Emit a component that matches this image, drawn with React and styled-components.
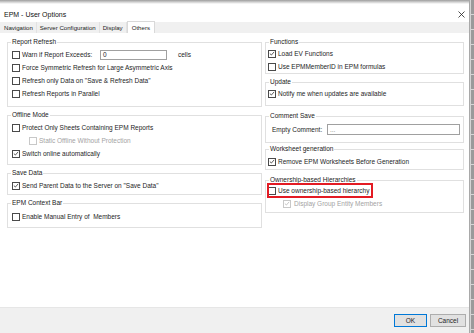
import React from "react";
import styled, { createGlobalStyle, css } from "styled-components";

const GlobalStyle = createGlobalStyle`
  html, body { margin: 0; padding: 0; background: #ffffff; }
  body { font-family: "Liberation Sans", Arial, sans-serif; color: #1e1e1e; }
  * { box-sizing: border-box; }
`;

const Screen = styled.div`
  width: 474px;
  height: 333px;
  display: flex;
  overflow: hidden;
`;

const Window = styled.div`
  flex: 0 0 470px;
  display: flex;
  flex-direction: column;
  border-right: 1px solid #a9a9a9;
  background: #ffffff;
`;

const SheetEdge = styled.div`
  flex: 1;
  border-left: 1px solid #d4d4d4;
  background: repeating-linear-gradient(
    to bottom,
    #9a9a9a 0,
    #9a9a9a 14px,
    #d6d6d6 14px,
    #d6d6d6 15px
  );
`;

const TitleBar = styled.div`
  height: 22px;
  display: flex;
  align-items: center;
  padding: 6px 4px 0 4px;
  background: linear-gradient(to bottom, #9d9d9d 0, #cfcfcf 2px, #ffffff 4px);
  font-size: 7px;
  color: #111;
`;

const CloseButton = styled.span`
  margin-left: auto;
  display: flex;
  align-items: center;
  justify-content: center;
  width: 8px;
  height: 8px;
`;

const TabStrip = styled.div`
  height: 11px;
  display: flex;
  align-items: flex-end;
  padding-left: 1px;
  background: #f0f0f0;
`;

const Tab = styled.div`
  height: 11px;
  display: flex;
  align-items: center;
  padding: 0 ${(p) => p.$pad}px;
  font-size: 6.1px;
  color: #222;
  border-right: 1px solid #e2e2e2;
  ${(p) =>
    p.$active &&
    css`
      height: 12px;
      background: #ffffff;
      border-left: 1px solid #d9d9d9;
      border-right: 1px solid #d9d9d9;
      border-top: 1px solid #d9d9d9;
    `}
`;

const Content = styled.div`
  flex: 1;
  display: grid;
  grid-template-columns: 255px 199px;
  column-gap: 3px;
  align-items: start;
  padding: 5px 5px 0 7px;
  background: #ffffff;
`;

const Column = styled.div`
  display: flex;
  flex-direction: column;
`;

const GroupBox = styled.fieldset`
  margin: ${(p) => p.$mt}px 0 0 0;
  padding: ${(p) => p.$pt}px 2px ${(p) => p.$pb}px ${(p) => p.$pl}px;
  border: 1px solid #e0e0e0;
  min-width: 0;
`;

const Legend = styled.legend`
  font-size: 6.5px;
  line-height: 8px;
  padding: 0 1px;
  margin-left: ${(p) => p.$ml}px;
  color: #222;
`;

const Row = styled.div`
  height: 13px;
  display: flex;
  align-items: center;
  gap: ${(p) => p.$gap}px;
  padding-left: ${(p) => p.$indent}px;
  font-size: 6.5px;
  white-space: nowrap;
  color: ${(p) => (p.$disabled ? "#a3a3a3" : "#1e1e1e")};
  ${(p) =>
    p.$highlight &&
    css`
      width: fit-content;
      padding-right: 3px;
      outline: 2px solid #e31b23;
      outline-offset: -1px;
    `}
`;

const Box = styled.span`
  flex: 0 0 8px;
  width: 8px;
  height: 8px;
  display: flex;
  align-items: center;
  justify-content: center;
  background: #ffffff;
  border: 1px solid ${(p) => (p.$disabled ? "#c8c8c8" : "#4a4a4a")};
`;

const FieldLabel = styled.span`
  flex: 0 0 ${(p) => p.$w}px;
`;

const TextInput = styled.span`
  flex: 0 0 ${(p) => p.$w}px;
  height: ${(p) => p.$h}px;
  display: flex;
  align-items: ${(p) => (p.$muted ? "flex-end" : "center")};
  padding-left: 2px;
  border: 1px solid #a0a0a0;
  background: #ffffff;
  color: ${(p) => (p.$muted ? "#8a8a8a" : "#1e1e1e")};
  font-size: 6.5px;
  line-height: 8px;
`;

const Unit = styled.span`
  margin-left: 9px;
`;

const Footer = styled.div`
  height: 26px;
  display: flex;
  justify-content: flex-end;
  align-items: flex-start;
  gap: 3px;
  padding: 6px 3px 0 0;
  background: #f0f0f0;
  border-top: 1px solid #e6e6e6;
`;

const Button = styled.button`
  width: ${(p) => p.$w}px;
  height: 13px;
  padding: 0;
  margin: 0;
  font-family: inherit;
  font-size: 6.5px;
  color: #1e1e1e;
  background: #e1e1e1;
  border: 1px solid ${(p) => (p.$primary ? "#0078d7" : "#adadad")};
  border-radius: 0;
`;

const Check = ({ checked, disabled }) => (
  <Box $disabled={disabled}>
    {checked && (
      <svg width="7" height="7" viewBox="0 0 7 7">
        <path
          d="M1 3.6 L2.8 5.3 L6 1.6"
          fill="none"
          stroke={disabled ? "#b5b5b5" : "#2a2a2a"}
          strokeWidth="0.9"
        />
      </svg>
    )}
  </Box>
);

const CloseIcon = () => (
  <svg width="7" height="7" viewBox="0 0 7 7">
    <path d="M0.5 0.5 L6.5 6.5 M6.5 0.5 L0.5 6.5" stroke="#222" strokeWidth="0.8" />
  </svg>
);

const leftGroups = [
  {
    title: "Report Refresh",
    mt: 0,
    pt: 2,
    pb: 6,
    rows: [
      { kind: "warn" },
      { label: "Force Symmetric Refresh for Large Asymmetric Axis" },
      { label: 'Refresh only Data on "Save & Refresh Data"' },
      { label: "Refresh Reports in Parallel" },
    ],
  },
  {
    title: "Offline Mode",
    mt: 4,
    pt: 2,
    pb: 4,
    rows: [
      { label: "Protect Only Sheets Containing EPM Reports" },
      { label: "Static Offline Without Protection", disabled: true, indent: 17 },
      { label: "Switch online automatically", checked: true },
    ],
  },
  {
    title: "Save Data",
    mt: 4,
    pt: 2,
    pb: 2,
    rows: [{ label: 'Send Parent Data to the Server on "Save Data"', checked: true }],
  },
  {
    title: "EPM Context Bar",
    mt: 4,
    pt: 3,
    pb: 4,
    rows: [{ label: "Enable Manual Entry of\u00a0 Members" }],
  },
];

const rightGroups = [
  {
    title: "Functions",
    mt: 0,
    pt: 1,
    pb: 0,
    rows: [
      { label: "Load EV Functions", checked: true },
      { label: "Use EPMMemberID in EPM formulas" },
    ],
  },
  {
    title: "Update",
    mt: 4,
    pt: 1,
    pb: 5,
    rows: [{ label: "Notify me when updates are available", checked: true }],
  },
  {
    title: "Comment Save",
    mt: 6,
    pt: 3,
    pb: 6,
    rows: [{ kind: "comment" }],
  },
  {
    title: "Worksheet generation",
    mt: 2,
    pt: 2,
    pb: 1,
    rows: [{ label: "Remove EPM Worksheets Before Generation", checked: true }],
  },
  {
    title: "Ownership-based Hierarchies",
    mt: 6,
    pt: 0,
    pb: 2,
    rows: [
      { label: "Use ownership-based hierarchy", highlight: true },
      { label: "Display Group Entity Members", checked: true, disabled: true, indent: 15, gap: 3 },
    ],
  },
];

const renderRow = (row, i) => {
  if (row.kind === "warn") {
    return (
      <Row key={i} $indent={0} $gap={2}>
        <Check />
        <FieldLabel $w={76}>Warn if Report Exceeds:</FieldLabel>
        <TextInput $w={67} $h={10}>0</TextInput>
        <Unit>cells</Unit>
      </Row>
    );
  }
  if (row.kind === "comment") {
    return (
      <Row key={i} $indent={4} $gap={0}>
        <FieldLabel $w={55}>Empty Comment:</FieldLabel>
        <TextInput $w={133} $h={11} $muted>...</TextInput>
      </Row>
    );
  }
  return (
    <Row
      key={i}
      $indent={row.indent || 0}
      $gap={row.gap || 2}
      $disabled={row.disabled}
      $highlight={row.highlight}
    >
      <Check checked={row.checked} disabled={row.disabled} />
      <span>{row.label}</span>
    </Row>
  );
};

const Group = ({ g, pl, ml }) => (
  <GroupBox $mt={g.mt} $pt={g.pt} $pb={g.pb} $pl={pl}>
    <Legend $ml={ml}>{g.title}</Legend>
    {g.rows.map(renderRow)}
  </GroupBox>
);

const tabs = [
  { name: "Navigation", pad: 3 },
  { name: "Server Configuration", pad: 3 },
  { name: "Display", pad: 3 },
  { name: "Others", pad: 4, active: true },
];

export default function App() {
  return (
    <>
      <GlobalStyle />
      <Screen>
        <Window>
          <TitleBar>
            <span>EPM - User Options</span>
            <CloseButton>
              <CloseIcon />
            </CloseButton>
          </TitleBar>
          <TabStrip>
            {tabs.map((t) => (
              <Tab key={t.name} $active={t.active} $pad={t.pad}>
                {t.name}
              </Tab>
            ))}
          </TabStrip>
          <Content>
            <Column>
              {leftGroups.map((g) => (
                <Group key={g.title} g={g} pl={4} ml={-1} />
              ))}
            </Column>
            <Column>
              {rightGroups.map((g) => (
                <Group key={g.title} g={g} pl={2} ml={1} />
              ))}
            </Column>
          </Content>
          <Footer>
            <Button $w={33} $primary>
              OK
            </Button>
            <Button $w={36}>Cancel</Button>
          </Footer>
        </Window>
        <SheetEdge />
      </Screen>
    </>
  );
}
